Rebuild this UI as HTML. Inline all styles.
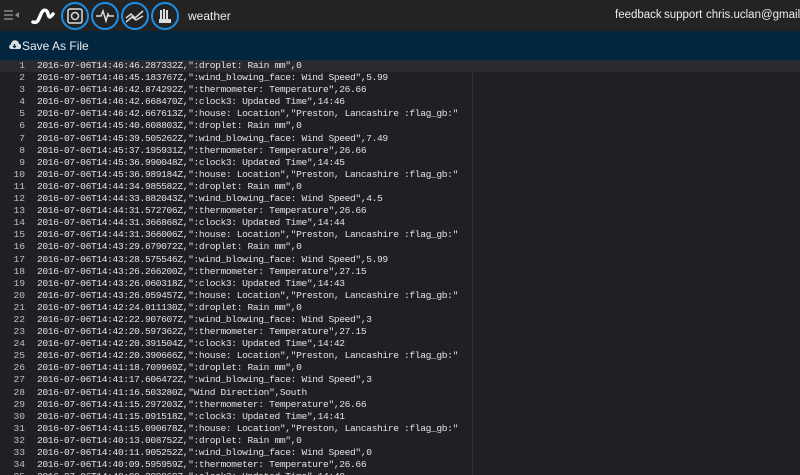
<!DOCTYPE html>
<html><head><meta charset="utf-8"><style>
*{margin:0;padding:0;box-sizing:border-box}
html,body{width:800px;height:475px;overflow:hidden}
body{background:#1f2023;font-family:"Liberation Sans",sans-serif;position:relative}
.top{position:absolute;left:0;top:0;width:800px;height:31px;background:#232324}
.blue{position:absolute;left:0;top:31px;width:800px;height:29px;background:#022540}
.ed{position:absolute;left:0;top:60px;width:800px;height:415px;background:#1f2023}
.hl{position:absolute;left:0;top:60px;width:800px;height:12px;background:#2a2b2f}
.pm{position:absolute;left:472px;top:60px;width:1px;height:415px;background:#2c2d31}
.lines{position:absolute;left:0;top:60px;font-family:"Liberation Mono",monospace;font-size:9.6px;letter-spacing:-0.36px;line-height:12.1px;color:#e2e2e2}
.l{white-space:pre;height:12.1px}
.n{display:inline-block;width:25px;text-align:right;color:#c0c0c0;margin-right:12px;letter-spacing:0}
.c{display:inline-block;width:28px;height:28px;border:2px solid #1d8fe6;border-radius:50%;position:absolute;top:2px}
.tx{position:absolute;color:#ececec;font-size:11.5px}
</style></head><body>
<div class="top"></div><div class="blue"></div><div class="ed"></div><div class="hl"></div><div class="pm"></div>
<svg style="position:absolute;left:4px;top:9px" width="16" height="12"><g stroke="#888" stroke-width="1.5"><line x1="0" y1="2" x2="9" y2="2"/><line x1="0" y1="6" x2="9" y2="6"/><line x1="0" y1="10" x2="9" y2="10"/></g><path d="M15 3 L11 6 L15 9Z" fill="#888"/></svg>
<svg style="position:absolute;left:30px;top:6px" width="26" height="20"><path d="M3 16 C8 18 9 12 11 8 C13 3 17 3 18 8 C19 12 20 12 23 8" stroke="#fff" stroke-width="3.5" fill="none" stroke-linecap="round"/></svg>
<div class="c" style="left:61px"><svg width="24" height="24"><rect x="5" y="5" width="14" height="14" rx="2" stroke="#ddd" fill="none" stroke-width="1.5"/><circle cx="12" cy="12" r="3.5" stroke="#ddd" fill="none" stroke-width="1.5"/></svg></div>
<div class="c" style="left:91px"><svg width="24" height="24"><path d="M3 12 H8 L10 7 L13 17 L15 10 L16 12 H21" stroke="#ddd" fill="none" stroke-width="1.5"/></svg></div>
<div class="c" style="left:121px"><svg width="24" height="24"><path d="M3 14 L8 10 L12 14 L20 7 M3 18 L9 13 L13 16 L20 12" stroke="#ddd" fill="none" stroke-width="1.5"/></svg></div>
<div class="c" style="left:151px"><svg width="24" height="24"><g fill="#ddd"><rect x="7" y="6" width="2" height="10"/><rect x="10" y="5" width="2" height="11"/><rect x="13" y="6" width="2" height="10"/><rect x="6" y="15" width="12" height="4"/></g></svg></div>
<div class="tx" style="left:188px;top:9px;font-size:12px">weather</div>
<div class="tx" style="left:615px;top:9px">feedback</div>
<div class="tx" style="left:664px;top:9px">support</div>
<div class="tx" style="left:706px;top:9px">chris.uclan@gmail.com</div>
<svg style="position:absolute;left:8px;top:40px" width="13" height="10"><path d="M3 9 H11 A2.5 2.5 0 0 0 11 4 A4 4 0 0 0 3 4.5 A2.3 2.3 0 0 0 3 9Z" fill="#ddd"/><path d="M6.5 4 V7.5 M5 6 L6.5 7.5 L8 6" stroke="#022540" stroke-width="1.2" fill="none"/></svg>
<div class="tx" style="left:22px;top:39px;font-size:12px">Save As File</div>
<div class="lines">
<div class="l"><span class="n">1</span>2016-07-06T14:46:46.287332Z,":droplet: Rain mm",0</div>
<div class="l"><span class="n">2</span>2016-07-06T14:46:45.183767Z,":wind_blowing_face: Wind Speed",5.99</div>
<div class="l"><span class="n">3</span>2016-07-06T14:46:42.874292Z,":thermometer: Temperature",26.66</div>
<div class="l"><span class="n">4</span>2016-07-06T14:46:42.668470Z,":clock3: Updated Time",14:46</div>
<div class="l"><span class="n">5</span>2016-07-06T14:46:42.667613Z,":house: Location","Preston, Lancashire :flag_gb:"</div>
<div class="l"><span class="n">6</span>2016-07-06T14:45:40.608803Z,":droplet: Rain mm",0</div>
<div class="l"><span class="n">7</span>2016-07-06T14:45:39.505262Z,":wind_blowing_face: Wind Speed",7.49</div>
<div class="l"><span class="n">8</span>2016-07-06T14:45:37.195931Z,":thermometer: Temperature",26.66</div>
<div class="l"><span class="n">9</span>2016-07-06T14:45:36.990048Z,":clock3: Updated Time",14:45</div>
<div class="l"><span class="n">10</span>2016-07-06T14:45:36.989184Z,":house: Location","Preston, Lancashire :flag_gb:"</div>
<div class="l"><span class="n">11</span>2016-07-06T14:44:34.985582Z,":droplet: Rain mm",0</div>
<div class="l"><span class="n">12</span>2016-07-06T14:44:33.882043Z,":wind_blowing_face: Wind Speed",4.5</div>
<div class="l"><span class="n">13</span>2016-07-06T14:44:31.572706Z,":thermometer: Temperature",26.66</div>
<div class="l"><span class="n">14</span>2016-07-06T14:44:31.366868Z,":clock3: Updated Time",14:44</div>
<div class="l"><span class="n">15</span>2016-07-06T14:44:31.366006Z,":house: Location","Preston, Lancashire :flag_gb:"</div>
<div class="l"><span class="n">16</span>2016-07-06T14:43:29.679072Z,":droplet: Rain mm",0</div>
<div class="l"><span class="n">17</span>2016-07-06T14:43:28.575546Z,":wind_blowing_face: Wind Speed",5.99</div>
<div class="l"><span class="n">18</span>2016-07-06T14:43:26.266200Z,":thermometer: Temperature",27.15</div>
<div class="l"><span class="n">19</span>2016-07-06T14:43:26.060318Z,":clock3: Updated Time",14:43</div>
<div class="l"><span class="n">20</span>2016-07-06T14:43:26.059457Z,":house: Location","Preston, Lancashire :flag_gb:"</div>
<div class="l"><span class="n">21</span>2016-07-06T14:42:24.011130Z,":droplet: Rain mm",0</div>
<div class="l"><span class="n">22</span>2016-07-06T14:42:22.907607Z,":wind_blowing_face: Wind Speed",3</div>
<div class="l"><span class="n">23</span>2016-07-06T14:42:20.597362Z,":thermometer: Temperature",27.15</div>
<div class="l"><span class="n">24</span>2016-07-06T14:42:20.391504Z,":clock3: Updated Time",14:42</div>
<div class="l"><span class="n">25</span>2016-07-06T14:42:20.390666Z,":house: Location","Preston, Lancashire :flag_gb:"</div>
<div class="l"><span class="n">26</span>2016-07-06T14:41:18.709969Z,":droplet: Rain mm",0</div>
<div class="l"><span class="n">27</span>2016-07-06T14:41:17.606472Z,":wind_blowing_face: Wind Speed",3</div>
<div class="l"><span class="n">28</span>2016-07-06T14:41:16.503280Z,"Wind Direction",South</div>
<div class="l"><span class="n">29</span>2016-07-06T14:41:15.297203Z,":thermometer: Temperature",26.66</div>
<div class="l"><span class="n">30</span>2016-07-06T14:41:15.091518Z,":clock3: Updated Time",14:41</div>
<div class="l"><span class="n">31</span>2016-07-06T14:41:15.090678Z,":house: Location","Preston, Lancashire :flag_gb:"</div>
<div class="l"><span class="n">32</span>2016-07-06T14:40:13.008752Z,":droplet: Rain mm",0</div>
<div class="l"><span class="n">33</span>2016-07-06T14:40:11.905252Z,":wind_blowing_face: Wind Speed",0</div>
<div class="l"><span class="n">34</span>2016-07-06T14:40:09.595959Z,":thermometer: Temperature",26.66</div>
<div class="l"><span class="n">35</span>2016-07-06T14:40:09.389068Z,":clock3: Updated Time",14:40</div>
</div>
</body></html>
